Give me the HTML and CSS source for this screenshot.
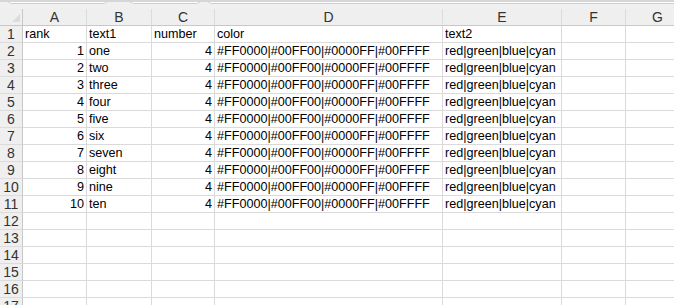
FILE: index.html
```html
<!DOCTYPE html>
<html lang="en">

<head>
    <meta charset="UTF-8">
    <meta name="viewport" content="width=device-width, initial-scale=1.0">
    <title>Sheet</title>
    <link rel="stylesheet" href="styles.css">
</head>

<body>

    <div class="tabs">
        <div class="tab tab-one"></div>
        <div class="tab tab-two"></div>
        <div class="tab tab-three"></div>
    </div>

    <div class="sheet">
        <div class="row head">
            <div class="corner"><span class="tri"></span></div>
            <div>A</div><div>B</div><div>C</div><div>D</div><div>E</div><div>F</div><div>G</div>
        </div>

        <div class="row">
            <div class="num">1</div>
            <div>rank</div><div>text1</div><div>number</div><div>color</div><div>text2</div><div></div><div></div>
        </div>
        <div class="row">
            <div class="num">2</div>
            <div class="r">1</div><div>one</div><div class="r">4</div><div>#FF0000|#00FF00|#0000FF|#00FFFF</div><div>red|green|blue|cyan</div><div></div><div></div>
        </div>
        <div class="row">
            <div class="num">3</div>
            <div class="r">2</div><div>two</div><div class="r">4</div><div>#FF0000|#00FF00|#0000FF|#00FFFF</div><div>red|green|blue|cyan</div><div></div><div></div>
        </div>
        <div class="row">
            <div class="num">4</div>
            <div class="r">3</div><div>three</div><div class="r">4</div><div>#FF0000|#00FF00|#0000FF|#00FFFF</div><div>red|green|blue|cyan</div><div></div><div></div>
        </div>
        <div class="row">
            <div class="num">5</div>
            <div class="r">4</div><div>four</div><div class="r">4</div><div>#FF0000|#00FF00|#0000FF|#00FFFF</div><div>red|green|blue|cyan</div><div></div><div></div>
        </div>
        <div class="row">
            <div class="num">6</div>
            <div class="r">5</div><div>five</div><div class="r">4</div><div>#FF0000|#00FF00|#0000FF|#00FFFF</div><div>red|green|blue|cyan</div><div></div><div></div>
        </div>
        <div class="row">
            <div class="num">7</div>
            <div class="r">6</div><div>six</div><div class="r">4</div><div>#FF0000|#00FF00|#0000FF|#00FFFF</div><div>red|green|blue|cyan</div><div></div><div></div>
        </div>
        <div class="row">
            <div class="num">8</div>
            <div class="r">7</div><div>seven</div><div class="r">4</div><div>#FF0000|#00FF00|#0000FF|#00FFFF</div><div>red|green|blue|cyan</div><div></div><div></div>
        </div>
        <div class="row">
            <div class="num">9</div>
            <div class="r">8</div><div>eight</div><div class="r">4</div><div>#FF0000|#00FF00|#0000FF|#00FFFF</div><div>red|green|blue|cyan</div><div></div><div></div>
        </div>
        <div class="row">
            <div class="num">10</div>
            <div class="r">9</div><div>nine</div><div class="r">4</div><div>#FF0000|#00FF00|#0000FF|#00FFFF</div><div>red|green|blue|cyan</div><div></div><div></div>
        </div>
        <div class="row">
            <div class="num">11</div>
            <div class="r">10</div><div>ten</div><div class="r">4</div><div>#FF0000|#00FF00|#0000FF|#00FFFF</div><div>red|green|blue|cyan</div><div></div><div></div>
        </div>

        <!-- empty rows -->
        <div class="row"><div class="num">12</div><div></div><div></div><div></div><div></div><div></div><div></div><div></div></div>
        <div class="row"><div class="num">13</div><div></div><div></div><div></div><div></div><div></div><div></div><div></div></div>
        <div class="row"><div class="num">14</div><div></div><div></div><div></div><div></div><div></div><div></div><div></div></div>
        <div class="row"><div class="num">15</div><div></div><div></div><div></div><div></div><div></div><div></div><div></div></div>
        <div class="row"><div class="num">16</div><div></div><div></div><div></div><div></div><div></div><div></div><div></div></div>
        <div class="row"><div class="num">17</div><div></div><div></div><div></div><div></div><div></div><div></div><div></div></div>
    </div>

</body>

</html>
```

FILE: styles.css
```css
body, html {
    margin: 0;
    padding: 0;
    height: 100%;
    overflow: hidden;
    background: #f0f0f0;
    font-family: 'Liberation Sans', Arial, sans-serif;
    font-size: 12.6px;
    color: #000;
}

.tabs {
    position: relative;
    height: 9px;
    border-top: 2px solid #d6d6d6;
    box-sizing: border-box;
    overflow: hidden;
}

.tab {
    position: absolute;
    top: -3px;
    height: 4px;
    background: #fff;
    border: 1px solid #cfcfcf;
    border-top: none;
    border-radius: 0 0 5px 5px;
}

.tab-one { left: 7px; width: 99px; }
.tab-two { left: 129px; width: 70px; }
.tab-three { left: 207px; width: 520px; }

.sheet {
    width: 100%;
    overflow: hidden;
}

.row {
    display: grid;
    grid-template-columns: 23px 64px 65px 63px 228px 119px 64px 64px;
    height: 17px;
}

.row > div {
    box-sizing: border-box;
    height: 17px;
    line-height: 16px;
    padding: 0 2px 0 2px;
    border-right: 1px solid #dadada;
    border-bottom: 1px solid #dadada;
    background: #fff;
    white-space: nowrap;
    overflow: hidden;
}

.row > div.r {
    text-align: right;
}

.row > div.num {
    background: #efefef;
    color: #333;
    font-size: 14px;
    text-align: center;
    padding: 0;
    border-right: 1px solid #c8c8c8;
    border-bottom: 1px solid #dcdcdc;
}

.head > div {
    background: #efefef;
    color: #333;
    font-size: 14px;
    text-align: center;
    padding: 0;
    border-right: 1px solid #dcdcdc;
    border-bottom: 1px solid #c8c8c8;
    line-height: 17px;
}

.head > div.corner {
    position: relative;
    border-right: 1px solid #c8c8c8;
}

.tri {
    position: absolute;
    right: 2px;
    bottom: 3px;
    width: 0;
    height: 0;
    border-left: 8px solid transparent;
    border-bottom: 8px solid #dcdcdc;
}
```
